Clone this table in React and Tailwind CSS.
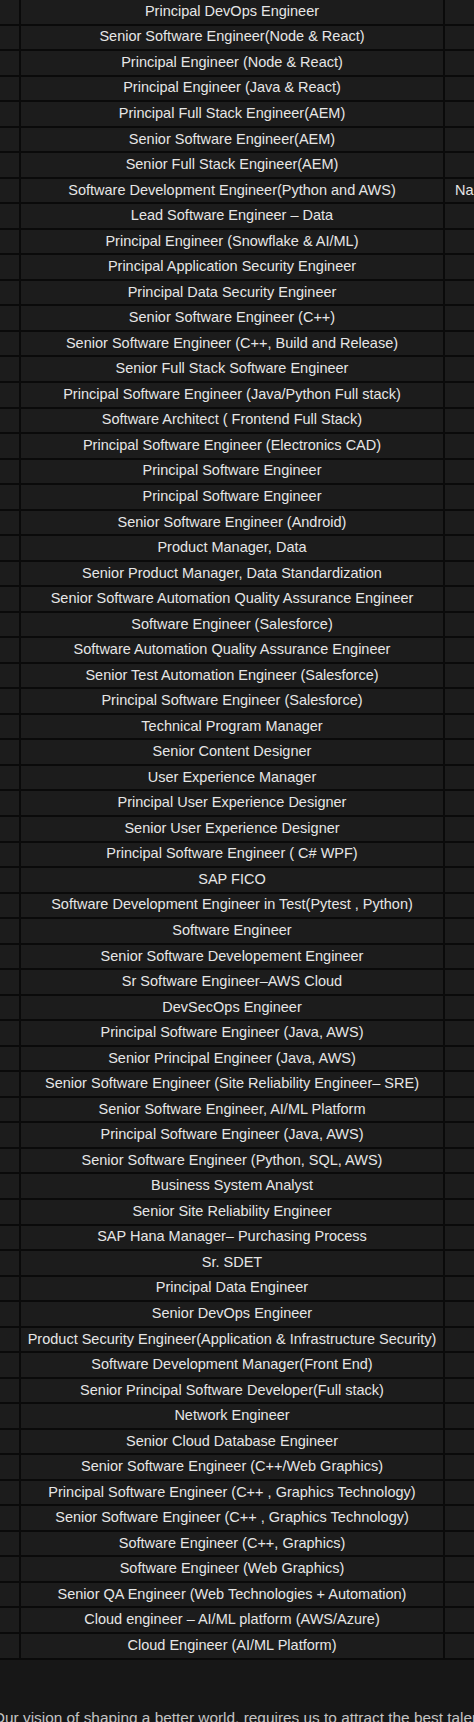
const roles = [
  'Principal DevOps Engineer',
  'Senior Software Engineer(Node & React)',
  'Principal Engineer (Node & React)',
  'Principal Engineer (Java & React)',
  'Principal Full Stack Engineer(AEM)',
  'Senior Software Engineer(AEM)',
  'Senior Full Stack Engineer(AEM)',
  'Software Development Engineer(Python and AWS)',
  'Lead Software Engineer – Data',
  'Principal Engineer (Snowflake & AI/ML)',
  'Principal Application Security Engineer',
  'Principal Data Security Engineer',
  'Senior Software Engineer (C++)',
  'Senior Software Engineer (C++, Build and Release)',
  'Senior Full Stack Software Engineer',
  'Principal Software Engineer (Java/Python Full stack)',
  'Software Architect ( Frontend Full Stack)',
  'Principal Software Engineer (Electronics CAD)',
  'Principal Software Engineer',
  'Principal Software Engineer',
  'Senior Software Engineer (Android)',
  'Product Manager, Data',
  'Senior Product Manager, Data Standardization',
  'Senior Software Automation Quality Assurance Engineer',
  'Software Engineer (Salesforce)',
  'Software Automation Quality Assurance Engineer',
  'Senior Test Automation Engineer (Salesforce)',
  'Principal Software Engineer (Salesforce)',
  'Technical Program Manager',
  'Senior Content Designer',
  'User Experience Manager',
  'Principal User Experience Designer',
  'Senior User Experience Designer',
  'Principal Software Engineer ( C# WPF)',
  'SAP FICO',
  'Software Development Engineer in Test(Pytest , Python)',
  'Software Engineer',
  'Senior Software Developement Engineer',
  'Sr Software Engineer–AWS Cloud',
  'DevSecOps Engineer',
  'Principal Software Engineer (Java, AWS)',
  'Senior Principal Engineer (Java, AWS)',
  'Senior Software Engineer (Site Reliability Engineer– SRE)',
  'Senior Software Engineer, AI/ML Platform',
  'Principal Software Engineer (Java, AWS)',
  'Senior Software Engineer (Python, SQL, AWS)',
  'Business System Analyst',
  'Senior Site Reliability Engineer',
  'SAP Hana Manager– Purchasing Process',
  'Sr. SDET',
  'Principal Data Engineer',
  'Senior DevOps Engineer',
  'Product Security Engineer(Application & Infrastructure Security)',
  'Software Development Manager(Front End)',
  'Senior Principal Software Developer(Full stack)',
  'Network Engineer',
  'Senior Cloud Database Engineer',
  'Senior Software Engineer (C++/Web Graphics)',
  'Principal Software Engineer (C++ , Graphics Technology)',
  'Senior Software Engineer (C++ , Graphics Technology)',
  'Software Engineer (C++, Graphics)',
  'Software Engineer (Web Graphics)',
  'Senior QA Engineer (Web Technologies + Automation)',
  'Cloud engineer – AI/ML platform (AWS/Azure)',
  'Cloud Engineer (AI/ML Platform)',
];

const App = () => {
  return (
    <div
      className="w-[474px] h-[1722px] overflow-hidden bg-[#171717] text-[#e6e6e6]"
      style={{ fontFamily: '"Liberation Sans", Arial, sans-serif' }}
    >
      {/* Openings table */}
      <div className="flex flex-col">
        {roles.map((role, i) => (
          <div key={i} className="flex h-[25.54px] border-b-2 border-[#0a0a0a] bg-[#1c1c1c]">
            <div className="w-[21px] shrink-0 border-r-2 border-[#0a0a0a] overflow-hidden"></div>
            <div className="w-[424px] shrink-0 border-r-2 border-[#0a0a0a] flex items-center justify-center text-[14.5px] whitespace-nowrap">
              {role}
            </div>
            <div className="flex-1 overflow-hidden flex items-center pl-[10px] text-[14.5px] whitespace-nowrap">
              {i === 7 ? 'Na' : ''}
            </div>
          </div>
        ))}
      </div>

      {/* Intro paragraph */}
      <p className="mt-[46px] -ml-[7px] text-[15.4px] text-[#c4c4c4] whitespace-nowrap">
        Our vision of shaping a better world, requires us to attract the best talent
      </p>
    </div>
  );
};

export default App;
